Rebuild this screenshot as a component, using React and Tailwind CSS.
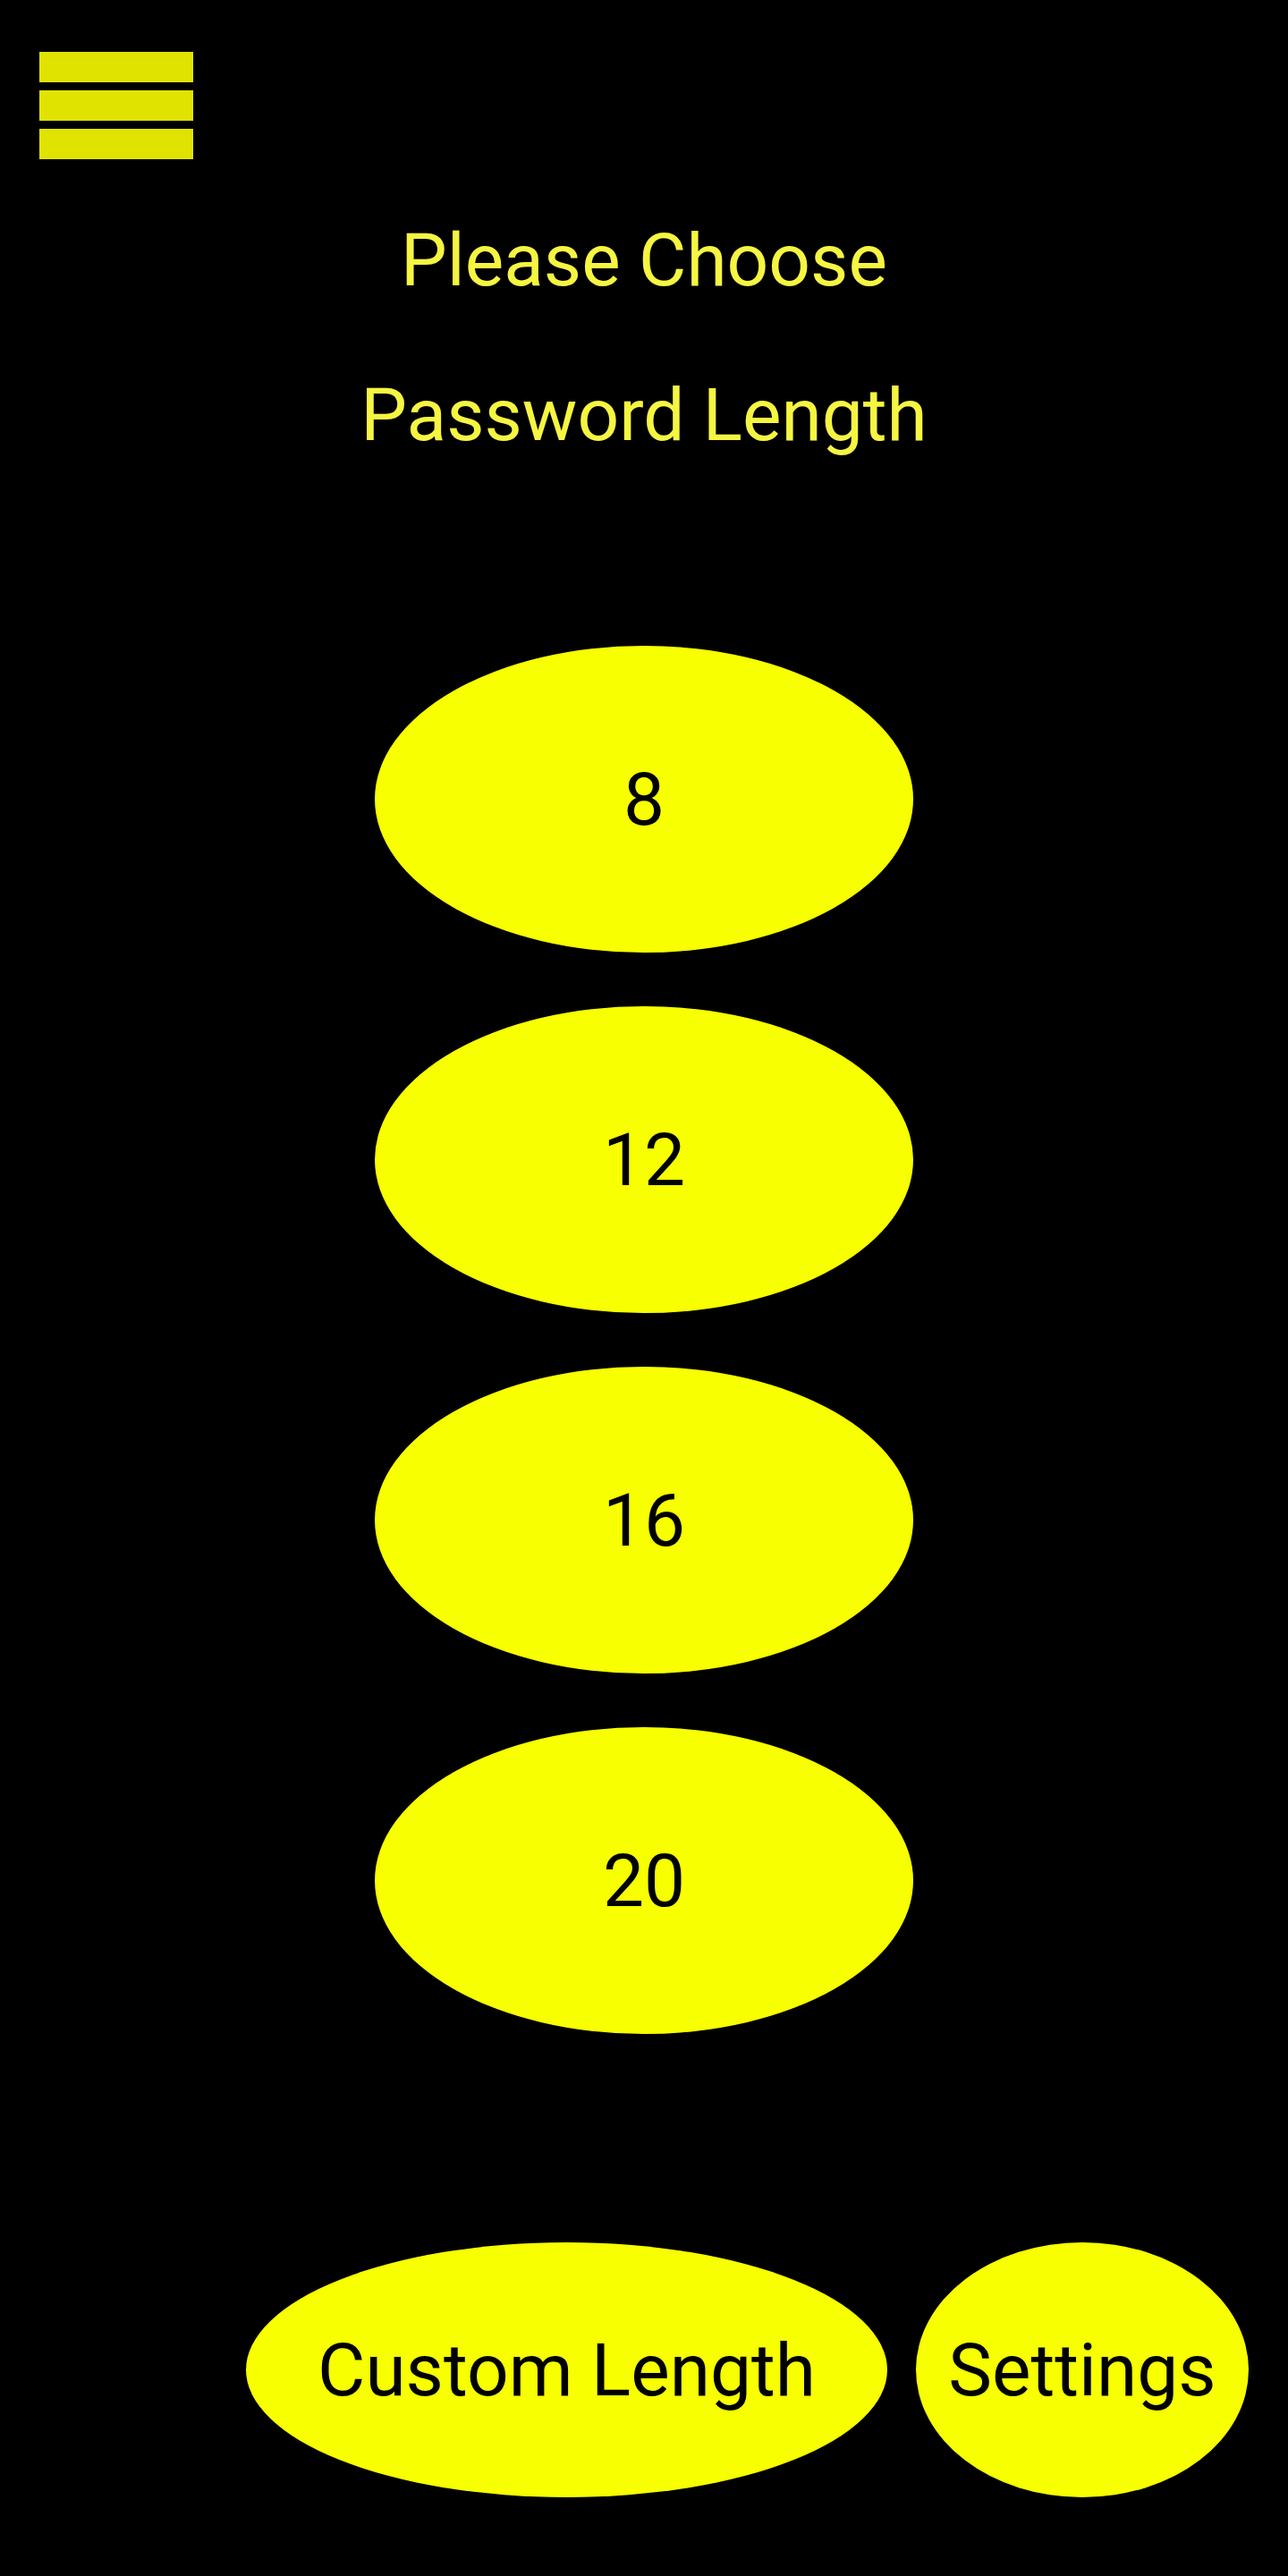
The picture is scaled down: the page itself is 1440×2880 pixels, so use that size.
import React from 'react';

const lengths = [8, 12, 16, 20];

function MenuIcon() {
    return (
        <div className="flex w-[172px] flex-col gap-[9px]">
            <div className="h-[34px] bg-[#e0e300]" />
            <div className="h-[34px] bg-[#e0e300]" />
            <div className="h-[34px] bg-[#e0e300]" />
        </div>
    );
}

function Oval({ label, className }) {
    return (
        <button className={`flex items-center justify-center rounded-[50%] bg-[#f7ff00] text-[82px] leading-[96px] text-black ${className}`}>
            {label}
        </button>
    );
}

export default function App() {
    return (
        <div className="min-h-[2880px] w-full bg-black font-['Roboto',sans-serif]">
            <div className="pl-[44px] pt-[58px]">
                <MenuIcon />
            </div>

            <div className="mt-[65px] flex flex-col items-center gap-[77px] text-[82px] leading-[96px] text-[#f5f542]">
                <p>Please Choose</p>
                <p>Password Length</p>
            </div>

            <div className="mt-[210px] flex flex-col items-center gap-[60px]">
                {lengths.map((n) => (
                    <Oval key={n} label={n} className="h-[343px] w-[602px]" />
                ))}
            </div>

            <div className="mt-[233px] flex justify-end gap-[32px] pr-[44px]">
                <Oval label="Custom Length" className="h-[285px] w-[717px]" />
                <Oval label="Settings" className="h-[285px] w-[372px]" />
            </div>
        </div>
    );
}
